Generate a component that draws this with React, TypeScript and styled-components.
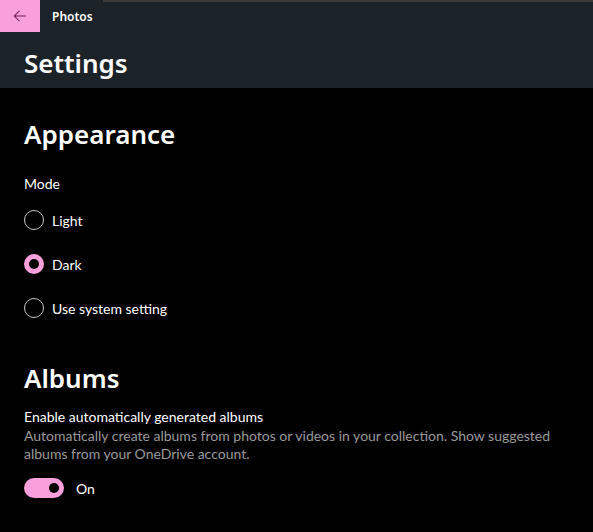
import React from "react";
import styled, { createGlobalStyle } from "styled-components";

const Global = createGlobalStyle`
  html, body { margin: 0; padding: 0; background: #000; }
  body { font-family: "Segoe UI", Lato, "Noto Sans", sans-serif; color: #fff; }
  #root { width: 593px; height: 532px; overflow: hidden; }
`;

const Page = styled.div`
  width: 593px;
  height: 532px;
  background: #000;
  display: flex;
  flex-direction: column;
`;

const Header = styled.header`
  height: 88px;
  background: #1b2329;
  display: flex;
  flex-direction: column;
  position: relative;
`;

const TopStrip = styled.div`
  position: absolute;
  left: 103px;
  right: 0;
  top: 0;
  height: 2px;
  background: #3a3a3a;
`;

const TitleBar = styled.div`
  display: flex;
  align-items: center;
  height: 32px;
`;

const BackButton = styled.button`
  width: 40px;
  height: 32px;
  border: none;
  padding: 0;
  background: #f99fdb;
  display: flex;
  align-items: center;
  justify-content: center;
  cursor: pointer;
`;

const AppName = styled.span`
  margin-left: 12px;
  font-family: "Noto Sans", sans-serif;
  font-size: 12px;
  font-weight: 600;
  color: #fff;
`;

const PageTitle = styled.h1`
  margin: 13px 0 0 24px;
  font-family: "Noto Sans", sans-serif;
  font-size: 26px;
  font-weight: 600;
  line-height: 36px;
`;

const Content = styled.main`
  padding: 0 24px;
  display: flex;
  flex-direction: column;
`;

const SectionTitle = styled.h2<{ $top: number }>`
  margin: ${(p) => p.$top}px 0 0;
  font-family: "Noto Sans", sans-serif;
  font-size: 26px;
  font-weight: 600;
  line-height: 36px;
`;

const Label = styled.div<{ $top: number }>`
  margin-top: ${(p) => p.$top}px;
  font-size: 14px;
  line-height: 20px;
`;

const RadioGroup = styled.div`
  display: flex;
  flex-direction: column;
  gap: 24px;
  margin-top: 16px;
`;

const RadioRow = styled.label`
  display: flex;
  align-items: center;
  height: 20px;
  gap: 8px;
  font-size: 14px;
`;

const RadioCircle = styled.span<{ $checked?: boolean }>`
  box-sizing: border-box;
  width: 20px;
  height: 20px;
  border-radius: 50%;
  border: ${(p) => (p.$checked ? "5px solid #f99fdb" : "1px solid #c8c8c8")};
  background: #000;
`;

const Description = styled.div`
  font-size: 14px;
  line-height: 18px;
  color: #9a9a9a;
  margin-top: 0;
`;

const ToggleRow = styled.div`
  display: flex;
  align-items: center;
  gap: 12px;
  margin-top: 15px;
  font-size: 14px;
`;

const Toggle = styled.span<{ $on?: boolean }>`
  box-sizing: border-box;
  width: 40px;
  height: 20px;
  border-radius: 10px;
  background: ${(p) => (p.$on ? "#f99fdb" : "transparent")};
  display: flex;
  align-items: center;
  justify-content: ${(p) => (p.$on ? "flex-end" : "flex-start")};
  padding: 0 5px;
`;

const Knob = styled.span`
  width: 10px;
  height: 10px;
  border-radius: 50%;
  background: #000;
`;

const modes = [
  { label: "Light", checked: false },
  { label: "Dark", checked: true },
  { label: "Use system setting", checked: false },
];

export default function App() {
  return (
    <Page>
      <Global />
      <Header>
        <TopStrip />
        <TitleBar>
          <BackButton aria-label="Back">
            <svg width="14" height="14" viewBox="0 0 16 16" fill="none" stroke="#6a1850" strokeWidth="1.2">
              <path d="M15 8H1.5M7.5 2L1.5 8l6 6" />
            </svg>
          </BackButton>
          <AppName>Photos</AppName>
        </TitleBar>
        <PageTitle>Settings</PageTitle>
      </Header>
      <Content>
        <SectionTitle $top={28}>Appearance</SectionTitle>
        <Label $top={22}>Mode</Label>
        <RadioGroup>
          {modes.map((m) => (
            <RadioRow key={m.label}>
              <RadioCircle $checked={m.checked} />
              {m.label}
            </RadioRow>
          ))}
        </RadioGroup>
        <SectionTitle $top={42}>Albums</SectionTitle>
        <Label $top={11}>Enable automatically generated albums</Label>
        <Description>
          Automatically create albums from photos or videos in your collection. Show suggested albums from your OneDrive account.
        </Description>
        <ToggleRow>
          <Toggle $on>
            <Knob />
          </Toggle>
          On
        </ToggleRow>
      </Content>
    </Page>
  );
}
